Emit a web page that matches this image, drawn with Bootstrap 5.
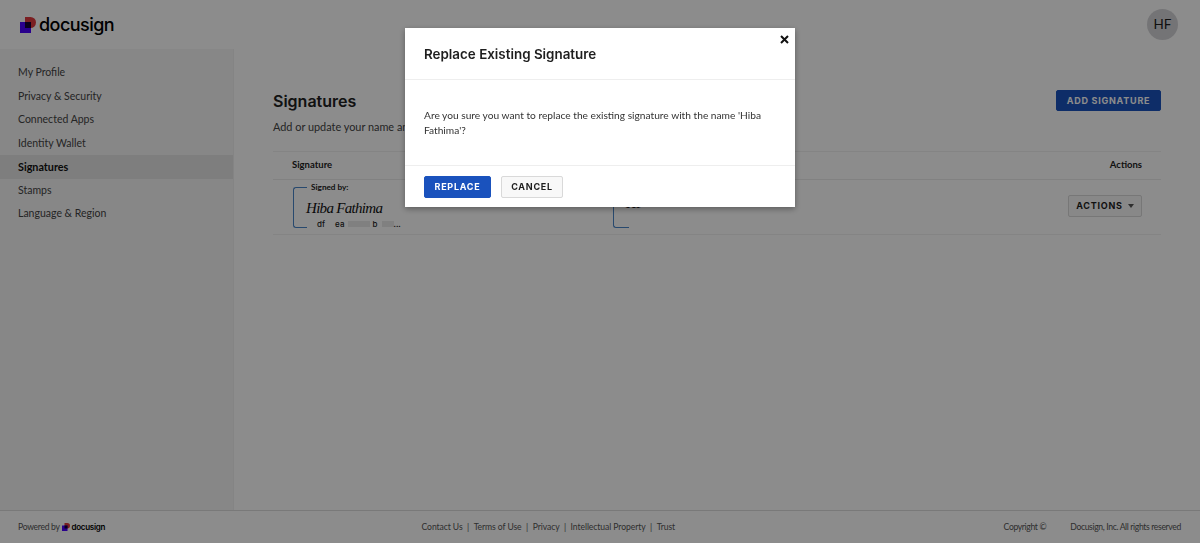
<!DOCTYPE html>
<html lang="en">
<head>
<meta charset="utf-8">
<title>Signatures</title>
<link href="https://cdn.jsdelivr.net/npm/bootstrap@5.3.0/dist/css/bootstrap.min.css" rel="stylesheet">
<style>
html,body{height:543px;overflow:hidden}
body{font-family:Lato,"Liberation Sans",sans-serif;color:#1e1e1e;background:#fff;font-size:11.5px}
.app{height:543px}
.top-bar{height:49px;padding:0 22px 0 20px}
.brand-name{font-family:Inter,"Liberation Sans",sans-serif;font-weight:500;font-size:18px;letter-spacing:-.55px;line-height:1;color:#000;margin-left:-1px}
.avatar{width:31px;height:31px;background:#d4d4d8;font-size:13.5px;margin-top:-1px}
.middle{min-height:0}
.side{width:234px;background:#f6f6f6;padding-top:12px;border-right:1px solid #f0f0f0}
.side a{display:block;height:23.5px;line-height:23px;padding-left:18px;color:#444;text-decoration:none;font-size:10.5px}
.side a.active{background:#e6e6e6;color:#111;font-weight:700;font-size:10.8px}
.main{padding:36px 39px 0 39px}
.page-title{font-family:Inter,"Liberation Sans",sans-serif;font-size:16px;font-weight:600;margin:4px 0 0;line-height:24px;color:#222}
.page-sub{font-size:10.9px;margin:6px 0 0;color:#444;line-height:16px}
.btn-ds{font-family:Inter,"Liberation Sans",sans-serif;font-size:9px;font-weight:700;letter-spacing:.75px;border-radius:2px;padding:0;height:21px;line-height:19px;text-transform:uppercase}
.btn-blue{background:#1a52bd;border:1px solid #1a52bd;color:#fff}
.btn-blue:hover{background:#1a52bd;color:#fff}
.btn-add{width:105px;margin-top:5px}
.btn-line{background:#f8f8f8;border:1px solid #d9d9d9;color:#1e1e1e}
.sig-table{margin-top:16px;border-top:1px solid #f0f0f0}
.sig-head{height:28px;border-bottom:1px solid #ececec;padding:0 19px;font-size:9.5px;font-weight:700;color:#222}
.sig-row{height:55px;border-bottom:1px solid #f0f0f0;padding:0 19px 0 20px}
.col-sig{width:320px;height:100%}
.frame{position:relative;width:110px;height:41px;margin-top:7px;border:1.5px solid #4a86c8;border-right:0;border-radius:3px 0 0 3px;clip-path:polygon(0 0,14px 0,14px 100%,0 100%)}
.frame-wide{clip-path:polygon(0 0,16px 0,16px 100%,0 100%)}
.sig-wrap{position:relative;margin-top:0}
.signed{position:absolute;left:18px;top:-6px;font-size:8.2px;font-weight:700;color:#222;white-space:nowrap}
.scrawl{position:absolute;left:13px;top:10px;font-family:"Liberation Serif",serif;font-style:italic;font-size:15px;letter-spacing:-.7px;color:#111;white-space:nowrap}
.scrawl-cut{top:12px}
.hash{position:absolute;left:24px;top:31px;font-family:Inter,sans-serif;font-size:8px;font-weight:500;color:#222;white-space:nowrap;display:flex;align-items:center}
.hash .mask{display:inline-block;height:6px;background:#e9e9e9}
.btn-actions{width:74px;height:22px;line-height:20px;font-size:9px;margin-top:-3px}
.caret{display:inline-block;width:0;height:0;border-left:3px solid transparent;border-right:3px solid transparent;border-top:4px solid #555;margin-left:5px;vertical-align:1px}
.foot{height:33px;border-top:1px solid #dcdcdc;padding:0 19px 0 18px;font-size:8.6px;color:#555}
.foot-brand{font-family:Inter,sans-serif;font-size:8px;font-weight:600;color:#000;letter-spacing:-.3px}
.foot-powered{letter-spacing:-.3px;gap:2px}
.foot-links{position:relative;left:-6px;letter-spacing:-.08px}
.foot-links span{margin:0 4.5px}
.foot-copy{letter-spacing:-.35px}
.shade{position:fixed;inset:0;background:#000;opacity:.45;z-index:1050}
.modal{z-index:1055}
.modal-dialog{width:390px;max-width:390px;margin:28px auto 0}
.modal-content{border:0;border-radius:0;box-shadow:0 2px 6px rgba(0,0,0,.35);height:179px}
.modal-header{height:52px;padding:0 19px;border-bottom:1px solid #eee;position:relative}
.modal-title{font-family:Inter,"Liberation Sans",sans-serif;font-size:13.4px;font-weight:600;color:#1e1e1e;margin-top:1px;white-space:nowrap}
.x{position:absolute;right:5px;top:4px;background:none;border:0;padding:0;width:12px;height:14px;line-height:0}
.modal-body{padding:0 19px;flex:1 1 auto;font-size:10.2px;line-height:15px;color:#333;display:flex;align-items:center}
.modal-footer{height:42px;padding:0 19px;border-top:1px solid #eee;justify-content:flex-start;gap:10px;flex-wrap:nowrap}
.modal-footer>*{margin:0}
.btn-replace{width:67px;height:22px}
.btn-cancel{width:62px;height:22px}
</style>
</head>
<body>
<div class="app d-flex flex-column">
  <header class="top-bar d-flex align-items-center justify-content-between flex-shrink-0">
    <div class="d-flex align-items-center gap-1">
      <svg width="16" height="16" viewBox="0 0 16 16" aria-hidden="true"><path d="M5 0h5.5a5.5 5.5 0 0 1 0 11H5z" fill="#e03a3e"/><rect x="0" y="5" width="11" height="11" fill="#4c00ff"/><rect x="5" y="5" width="6" height="6" fill="#130032"/></svg>
      <span class="brand-name">docusign</span>
    </div>
    <div class="avatar rounded-circle d-flex align-items-center justify-content-center">HF</div>
  </header>
  <div class="middle d-flex flex-grow-1">
    <nav class="side flex-shrink-0">
      <a href="#">My Profile</a>
      <a href="#">Privacy &amp; Security</a>
      <a href="#">Connected Apps</a>
      <a href="#">Identity Wallet</a>
      <a href="#" class="active">Signatures</a>
      <a href="#">Stamps</a>
      <a href="#">Language &amp; Region</a>
    </nav>
    <main class="main flex-grow-1">
      <div class="d-flex justify-content-between align-items-start">
        <div>
          <h1 class="page-title">Signatures</h1>
          <p class="page-sub">Add or update your name and initials.</p>
        </div>
        <button class="btn btn-ds btn-blue btn-add">Add Signature</button>
      </div>
      <div class="sig-table">
        <div class="sig-head d-flex align-items-center justify-content-between"><span>Signature</span><span>Actions</span></div>
        <div class="sig-row d-flex align-items-center justify-content-between">
          <div class="d-flex h-100">
            <div class="col-sig">
              <div class="sig-wrap">
                <div class="frame"></div>
                <span class="signed">Signed by:</span>
                <span class="scrawl">Hiba Fathima</span>
                <span class="hash">df<span class="ms-2">&nbsp;ea</span><span class="mask ms-1" style="width:22px"></span>&nbsp;b<span class="mask ms-1" style="width:12px"></span>...</span>
              </div>
            </div>
            <div class="sig-wrap"><div class="frame frame-wide"></div><span class="scrawl scrawl-cut">HF</span></div>
          </div>
          <button class="btn btn-ds btn-line btn-actions">Actions<i class="caret"></i></button>
        </div>
      </div>
    </main>
  </div>
  <footer class="foot d-flex align-items-center justify-content-between flex-shrink-0">
    <div class="foot-powered d-flex align-items-center">Powered by
      <svg width="8" height="8" viewBox="0 0 16 16" aria-hidden="true"><path d="M5 0h5.5a5.5 5.5 0 0 1 0 11H5z" fill="#e03a3e"/><rect x="0" y="5" width="11" height="11" fill="#4c00ff"/><rect x="5" y="5" width="6" height="6" fill="#130032"/></svg>
      <span class="foot-brand">docusign</span>
    </div>
    <div class="foot-links">Contact Us<span>|</span>Terms of Use<span>|</span>Privacy<span>|</span>Intellectual Property<span>|</span>Trust</div>
    <div class="foot-copy">Copyright ©&nbsp;&nbsp;&nbsp;&nbsp;&nbsp;&nbsp;&nbsp;&nbsp;&nbsp;&nbsp;&nbsp;&nbsp;&nbsp;Docusign, Inc. All rights reserved</div>
  </footer>
</div>
<div class="shade"></div>
<div class="modal d-block" tabindex="-1" role="dialog">
  <div class="modal-dialog">
    <div class="modal-content">
      <div class="modal-header">
        <h5 class="modal-title">Replace Existing Signature</h5>
        <button class="x" aria-label="Close"><svg width="9" height="9" viewBox="0 0 9 9"><path d="M1 1l7 7M8 1L1 8" stroke="#111" stroke-width="2"/></svg></button>
      </div>
      <div class="modal-body"><div>Are you sure you want to replace the existing signature with the name 'Hiba Fathima'?</div></div>
      <div class="modal-footer">
        <button class="btn btn-ds btn-blue btn-replace">Replace</button>
        <button class="btn btn-ds btn-line btn-cancel">Cancel</button>
      </div>
    </div>
  </div>
</div>
<script src="https://cdn.jsdelivr.net/npm/bootstrap@5.3.0/dist/js/bootstrap.bundle.min.js"></script>
</body>
</html>
